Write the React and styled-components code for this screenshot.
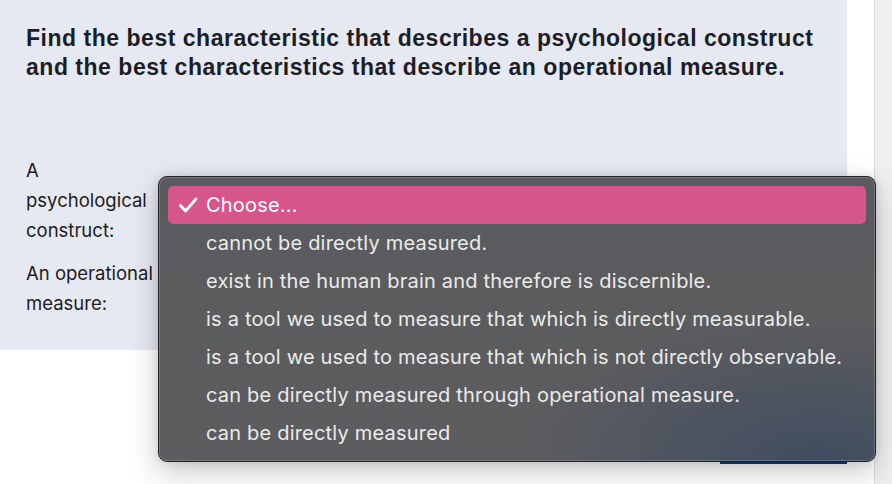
import React from 'react';
import styled, { createGlobalStyle } from 'styled-components';

const GlobalStyle = createGlobalStyle`
  html, body {
    margin: 0;
    padding: 0;
    background: #ffffff;
    overflow: hidden;
  }
`;

const Page = styled.div`
  position: relative;
  display: flex;
  width: 892px;
  height: 484px;
`;

const Main = styled.div`
  width: 874px;
  display: flex;
  flex-direction: column;
`;

const ScrollTrack = styled.div`
  flex: 1;
  background: #efefef;
  border-left: 1px solid #dcdcdc;
`;

const Panel = styled.div`
  width: 847px;
  height: 350px;
  box-sizing: border-box;
  background: #e6e9f2;
  padding: 24px 30px 0 26px;
`;

const Title = styled.h2`
  margin: 0;
  font-family: 'Liberation Sans', Arial, sans-serif;
  font-weight: 700;
  font-size: 23px;
  letter-spacing: 0.52px;
  line-height: 29px;
  color: #1c1e26;
`;

const Form = styled.div`
  margin-top: 73px;
  display: flex;
  flex-direction: column;
  gap: 13px;
`;

const FieldRow = styled.div`
  display: flex;
`;

const Label = styled.div`
  width: 131px;
  font-family: Inter, 'Noto Sans', sans-serif;
  font-size: 18.5px;
  line-height: 30px;
  color: #1c1c1e;
`;

const Footer = styled.div`
  width: 847px;
  display: flex;
  justify-content: flex-end;
  padding-top: 74px;
`;

const SubmitButton = styled.button`
  width: 127px;
  height: 40px;
  border: 0;
  background: #0b3d7d;
`;

const Menu = styled.ul`
  position: absolute;
  left: 158px;
  top: 176px;
  width: 718px;
  height: 286px;
  box-sizing: border-box;
  margin: 0;
  padding: 9px 9px;
  list-style: none;
  border-radius: 9px;
  border: 1px solid #232325;
  background:
    radial-gradient(ellipse 300px 140px at 92% 100%, rgba(62, 76, 96, 0.95) 0%, rgba(62, 76, 96, 0) 100%),
    linear-gradient(180deg, #5a5b5e 0%, #5d5d5f 100%);
  box-shadow:
    inset 0 0 0 1px rgba(255, 255, 255, 0.18),
    0 10px 30px rgba(0, 0, 0, 0.22),
    0 0 8px rgba(0, 0, 0, 0.12);
`;

const Item = styled.li`
  display: flex;
  align-items: center;
  height: 38px;
  padding-left: 10px;
  border-radius: 5px;
  font-family: Inter, 'Noto Sans', sans-serif;
  font-size: 20px;
  letter-spacing: 0.2px;
  color: ${(p) => (p.$selected ? '#ffffff' : '#ebebeb')};
  background: ${(p) => (p.$selected ? '#d6558a' : 'transparent')};
`;

const Check = styled.span`
  width: 28px;
  display: flex;
  align-items: center;
`;

const options = [
  'Choose...',
  'cannot be directly measured.',
  'exist in the human brain and therefore is discernible.',
  'is a tool we used to measure that which is directly measurable.',
  'is a tool we used to measure that which is not directly observable.',
  'can be directly measured through operational measure.',
  'can be directly measured',
];

export default function App() {
  return (
    <>
      <GlobalStyle />
      <Page>
        <Main>
          <Panel>
            <Title>
              Find the best characteristic that describes a psychological construct and the best
              characteristics that describe an operational measure.
            </Title>
            <Form>
              <FieldRow>
                <Label>A psychological construct:</Label>
              </FieldRow>
              <FieldRow>
                <Label>An operational measure:</Label>
              </FieldRow>
            </Form>
          </Panel>
          <Footer>
            <SubmitButton />
          </Footer>
        </Main>
        <ScrollTrack />
        <Menu>
          {options.map((opt, i) => (
            <Item key={opt} $selected={i === 0}>
              <Check>
                {i === 0 && (
                  <svg width="20" height="16" viewBox="0 0 20 16">
                    <path
                      d="M2.5 8.5 L7.5 14 L18 2"
                      fill="none"
                      stroke="#fff"
                      strokeWidth="2.8"
                      strokeLinecap="round"
                      strokeLinejoin="round"
                    />
                  </svg>
                )}
              </Check>
              {opt}
            </Item>
          ))}
        </Menu>
      </Page>
    </>
  );
}
